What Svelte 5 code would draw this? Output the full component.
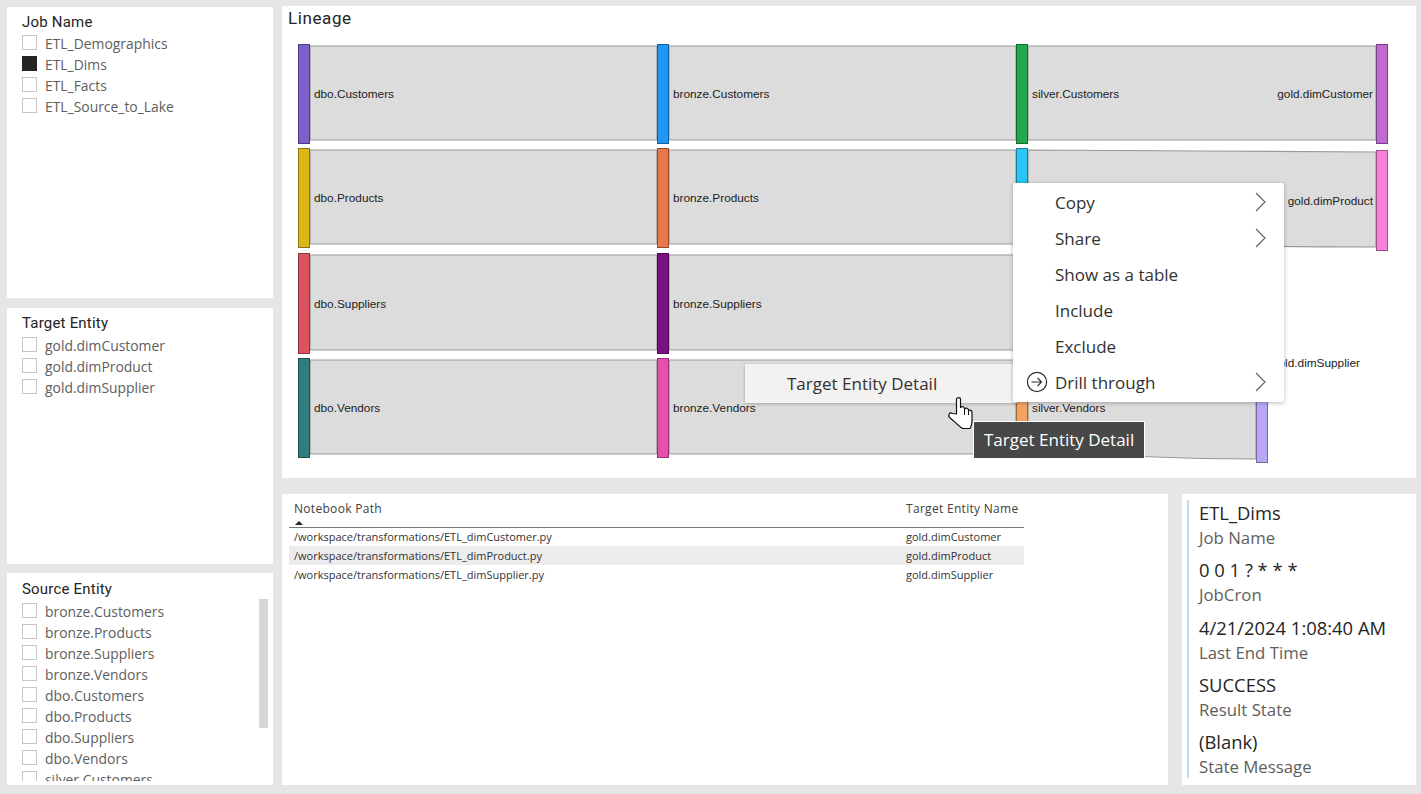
<script>
  const slicers = [
    { title: 'Job Name', cls: 'job', items: ['ETL_Demographics', 'ETL_Dims', 'ETL_Facts', 'ETL_Source_to_Lake'], selected: 'ETL_Dims' },
    { title: 'Target Entity', cls: 'target', items: ['gold.dimCustomer', 'gold.dimProduct', 'gold.dimSupplier'] },
    {
      title: 'Source Entity',
      cls: 'source',
      scroll: true,
      items: ['bronze.Customers', 'bronze.Products', 'bronze.Suppliers', 'bronze.Vendors', 'dbo.Customers', 'dbo.Products', 'dbo.Suppliers', 'dbo.Vendors', 'silver.Customers']
    }
  ];

  // sankey coordinates are page pixels, the svg viewBox starts at the panel corner
  const links = [
    [310, 46, 140, 657, 46, 140], [669, 46, 140, 1016, 46, 140], [1028, 46, 140, 1376, 46, 140],
    [310, 150, 244, 657, 150, 244], [669, 150, 244, 1016, 150, 244], [1028, 150, 244, 1376, 152, 247],
    [310, 255, 350, 657, 255, 350], [669, 255, 350, 1016, 255, 350], [1028, 255, 350, 1256, 264, 359],
    [310, 360, 454, 657, 360, 454], [669, 360, 454, 1016, 360, 454], [1028, 360, 454, 1256, 363, 459]
  ];

  const nodes = [
    { x: 298, y: 44, h: 100, fill: '#7f5fc9', stroke: '#4f3a85' },
    { x: 298, y: 148, h: 100, fill: '#dcb817', stroke: '#8a7310' },
    { x: 298, y: 253, h: 101, fill: '#d9545f', stroke: '#8a353c' },
    { x: 298, y: 358, h: 100, fill: '#2f7f80', stroke: '#1d5050' },
    { x: 657, y: 44, h: 100, fill: '#2196f3', stroke: '#155f9a' },
    { x: 657, y: 148, h: 100, fill: '#e8784a', stroke: '#934c2f' },
    { x: 657, y: 253, h: 101, fill: '#7b1085', stroke: '#4e0a54' },
    { x: 657, y: 358, h: 100, fill: '#e64fae', stroke: '#92326e' },
    { x: 1016, y: 44, h: 100, fill: '#22a84f', stroke: '#156a32' },
    { x: 1016, y: 148, h: 100, fill: '#29c5f6', stroke: '#1a7d9c' },
    { x: 1016, y: 253, h: 101, fill: '#a0a0a0', stroke: '#666' },
    { x: 1016, y: 358, h: 100, fill: '#f4a460', stroke: '#9a683d' },
    { x: 1376, y: 44, h: 100, fill: '#bf6bd0', stroke: '#7a3f88' },
    { x: 1376, y: 150, h: 101, fill: '#f67fd8', stroke: '#9a5089' },
    { x: 1256, y: 262, h: 201, fill: '#b9a6f5', stroke: '#75699b' }
  ];

  const labels = [
    ['dbo.Customers', 314, 94], ['dbo.Products', 314, 198], ['dbo.Suppliers', 314, 304], ['dbo.Vendors', 314, 408],
    ['bronze.Customers', 673, 94], ['bronze.Products', 673, 198], ['bronze.Suppliers', 673, 304], ['bronze.Vendors', 673, 408],
    ['silver.Customers', 1032, 94], ['silver.Vendors', 1032, 408], ['gold.dimSupplier', 1272, 363]
  ];
  const endLabels = [['gold.dimCustomer', 1373, 94], ['gold.dimProduct', 1373, 201]];

  const linkPath = (l) => {
    const mid = (l[0] + l[3]) / 2;
    return `M${l[0]} ${l[1]}C${mid} ${l[1]} ${mid} ${l[4]} ${l[3]} ${l[4]}V${l[5]}C${mid} ${l[5]} ${mid} ${l[2]} ${l[0]} ${l[2]}Z`;
  };

  const menu = [
    { label: 'Copy', more: true },
    { label: 'Share', more: true },
    { label: 'Show as a table' },
    { label: 'Include' },
    { label: 'Exclude' },
    { label: 'Drill through', more: true, drill: true }
  ];

  const rows = [
    ['/workspace/transformations/ETL_dimCustomer.py', 'gold.dimCustomer'],
    ['/workspace/transformations/ETL_dimProduct.py', 'gold.dimProduct'],
    ['/workspace/transformations/ETL_dimSupplier.py', 'gold.dimSupplier']
  ];

  const details = [
    ['ETL_Dims', 'Job Name'],
    ['0 0 1 ? * * *', 'JobCron'],
    ['4/21/2024 1:08:40 AM', 'Last End Time'],
    ['SUCCESS', 'Result State'],
    ['(Blank)', 'State Message']
  ];
</script>

<div class="page">
  <div class="left">
    {#each slicers as s}
      <section class="panel slicer {s.cls}">
        <h3>{s.title}</h3>
        <div class="slicer-body">
          <ul>
            {#each s.items as item}
              <li>
                <span class="box" class:on={item === s.selected}></span>
                <span class="item-text">{item}</span>
              </li>
            {/each}
          </ul>
          {#if s.scroll}<div class="scrollbar"></div>{/if}
        </div>
      </section>
    {/each}
  </div>

  <div class="right">
    <section class="panel lineage">
      <svg class="sankey" viewBox="282 6 1134 472" aria-label="Lineage diagram">
        {#each links as l}
          <path d={linkPath(l)} class="link" />
        {/each}
        {#each nodes as n}
          <rect x={n.x + 0.5} y={n.y + 0.5} width="11" height={n.h - 1} fill={n.fill} stroke={n.stroke} />
        {/each}
        {#each labels as t}
          <text x={t[1]} y={t[2]} dy="3.6">{t[0]}</text>
        {/each}
        {#each endLabels as t}
          <text x={t[1]} y={t[2]} dy="3.6" text-anchor="end">{t[0]}</text>
        {/each}
      </svg>

      <h2>Lineage</h2>

      <div class="submenu">Target Entity Detail</div>

      <div class="menu">
        {#each menu as m}
          <div class="menu-item">
            <span class="menu-icon">
              {#if m.drill}
                <svg width="22" height="22" viewBox="0 0 22 22" fill="none" stroke="#323130" stroke-width="1.2">
                  <circle cx="11" cy="11" r="9.6" />
                  <path d="M5.5 11H15.5M11.5 7L15.5 11L11.5 15" />
                </svg>
              {/if}
            </span>
            <span class="menu-label">{m.label}</span>
            {#if m.more}
              <svg class="chev" width="11" height="20" viewBox="0 0 11 20" fill="none" stroke="#605e5c" stroke-width="1.1">
                <path d="M1 1L10 10L1 19" />
              </svg>
            {/if}
          </div>
        {/each}
      </div>

      <div class="tooltip">Target Entity Detail</div>

      <svg class="hand" width="36" height="40" viewBox="0 0 36 40">
        <path d="M12.5 20V5.5C12.5 3 16.5 3 16.5 5.5V13.5C18 12 20.5 12.5 20.5 15C22 13.5 24.5 14 24.5 16.5C26 15.5 28 16.5 28 18.5V27C28 30 27.3 32 26 34.5H18.5C15 32 10 27 5.5 23.5C3.5 20.5 6 18 8.5 19.5Z" fill="#fff" stroke="#111" stroke-width="1.2" stroke-linejoin="round" />
        <path d="M20.5 15V21M24.5 16.5V21" fill="none" stroke="#111" stroke-width="1" />
      </svg>
    </section>

    <div class="bottom">
      <section class="panel table-panel">
        <table>
          <thead>
            <tr>
              <th class="path-col">Notebook Path<span class="sort"></span></th>
              <th>Target Entity Name</th>
            </tr>
          </thead>
          <tbody>
            {#each rows as r, i}
              <tr class:shade={i === 1}>
                <td>{r[0]}</td>
                <td>{r[1]}</td>
              </tr>
            {/each}
          </tbody>
        </table>
      </section>

      <section class="panel card">
        <div class="card-inner">
          {#each details as d}
            <div class="detail">
              <div class="value">{d[0]}</div>
              <div class="name">{d[1]}</div>
            </div>
          {/each}
        </div>
      </section>
    </div>
  </div>
</div>

<style>
  :global(body) {
    background: #e6e6e6;
    font-family: 'Open Sans', 'Noto Sans', sans-serif;
    overflow: hidden;
  }

  .page {
    display: flex;
    gap: 9px;
    height: 794px;
    padding: 6px 5px 0 7px;
    box-sizing: border-box;
  }

  .panel {
    background: #fff;
  }

  .left {
    width: 266px;
    flex-shrink: 0;
    display: flex;
    flex-direction: column;
    padding-top: 1px;
  }

  .slicer {
    padding: 7px 5px 0 15px;
    box-sizing: border-box;
    overflow: hidden;
  }

  .job { height: 291px; }
  .target { height: 256px; margin-top: 10px; }
  .source { height: 212px; margin-top: 9px; padding-top: 8px; }

  h3 {
    margin: 0;
    font-family: Roboto, sans-serif;
    font-size: 15px;
    font-weight: 400;
    line-height: 17px;
    color: #252423;
    letter-spacing: 0.2px;
  }

  .slicer-body {
    display: flex;
    justify-content: space-between;
    margin-top: 2px;
  }

  .target .slicer-body {
    margin-top: 3px;
  }

  .source .slicer-body {
    margin-top: 1px;
  }

  ul {
    list-style: none;
    margin: 0;
    padding: 0;
  }

  .source ul {
    height: 180px;
    margin-top: 2px;
    overflow: hidden;
  }

  li {
    display: flex;
    align-items: center;
    height: 21px;
    gap: 8px;
  }

  .box {
    width: 13px;
    height: 13px;
    border: 1px solid #c8c6c4;
    margin-top: -3px;
  }

  .box.on {
    background: #252423;
    border-color: #252423;
  }

  .item-text {
    font-size: 13.9px;
    color: #605e5c;
    white-space: nowrap;
  }

  .scrollbar {
    width: 9px;
    height: 129px;
    background: #d6d6d4;
  }

  .right {
    flex: 1;
    display: flex;
    flex-direction: column;
    gap: 16px;
    min-width: 0;
  }

  .lineage {
    position: relative;
    height: 472px;
    flex-shrink: 0;
  }

  h2 {
    position: relative;
    margin: 0;
    padding: 3px 0 0 6px;
    font-family: Roboto, sans-serif;
    font-size: 17px;
    font-weight: 400;
    line-height: 19px;
    color: #252423;
    letter-spacing: 0.6px;
  }

  .sankey {
    position: absolute;
    inset: 0;
    width: 1134px;
    height: 472px;
  }

  .link {
    fill: #dcdcdc;
    stroke: #999;
    stroke-width: 1.2;
  }

  .sankey text {
    font-family: 'Liberation Sans', Arial, sans-serif;
    font-size: 11.8px;
    fill: #222;
  }

  .submenu {
    position: absolute;
    left: 463px;
    top: 358px;
    width: 272px;
    height: 39px;
    box-sizing: border-box;
    padding-left: 42px;
    background: #f3f2f1;
    box-shadow: 0 1px 3px rgba(0, 0, 0, 0.25);
    font-size: 17px;
    line-height: 39px;
    color: #323130;
  }

  .menu {
    position: absolute;
    left: 731px;
    top: 177px;
    width: 271px;
    height: 219px;
    padding: 1px 0 2px;
    box-sizing: border-box;
    background: #fff;
    border-radius: 2px;
    box-shadow: 0 1px 4px rgba(0, 0, 0, 0.28);
  }

  .menu-item {
    display: flex;
    align-items: center;
    height: 36px;
    font-size: 17px;
    color: #323130;
  }

  .menu-icon {
    width: 42px;
    flex-shrink: 0;
    display: flex;
    justify-content: flex-end;
    box-sizing: border-box;
  }

  .menu-icon svg {
    margin-right: 7px;
  }

  .menu-label {
    flex: 1;
  }

  .chev {
    margin-right: 18px;
  }

  .tooltip {
    position: absolute;
    left: 691px;
    top: 415px;
    height: 36px;
    padding: 0 10px;
    background: #484848;
    border: 1px solid #fff;
    font-size: 17px;
    line-height: 36px;
    color: #fff;
    white-space: nowrap;
  }

  .hand {
    position: absolute;
    left: 662px;
    top: 388px;
  }

  .bottom {
    display: flex;
    gap: 14px;
    height: 291px;
  }

  .table-panel {
    flex: 1;
    padding: 0 0 0 7px;
    min-width: 0;
  }

  table {
    width: 735px;
    border-collapse: collapse;
    table-layout: fixed;
    font-size: 11px;
    color: #252423;
  }

  th {
    position: relative;
    height: 33px;
    padding: 0 5px 9.5px;
    box-sizing: border-box;
    text-align: left;
    font-size: 12px;
    font-weight: 400;
    vertical-align: bottom;
    color: #404040;
    letter-spacing: 0.3px;
    border-bottom: 1px solid #777;
  }

  th.path-col {
    width: 612px;
  }

  .sort {
    position: absolute;
    left: 6px;
    bottom: 2px;
    border-left: 4px solid transparent;
    border-right: 4px solid transparent;
    border-bottom: 4px solid #222;
  }

  td {
    height: 19px;
    padding: 0 5px;
    box-sizing: border-box;
    white-space: nowrap;
    color: #333;
  }

  .shade td {
    background: #ececec;
  }

  .card {
    width: 234px;
    flex-shrink: 0;
    padding: 6px 0 7px 5px;
    box-sizing: border-box;
  }

  .card-inner {
    height: 100%;
    border-left: 2px solid #bfdcf2;
    padding-left: 10px;
  }

  .detail {
    height: 57.3px;
  }

  .value {
    font-size: 18.4px;
    line-height: 26px;
    color: #252423;
    white-space: nowrap;
  }

  .name {
    font-size: 16.8px;
    line-height: 24px;
    color: #605e5c;
  }
</style>
